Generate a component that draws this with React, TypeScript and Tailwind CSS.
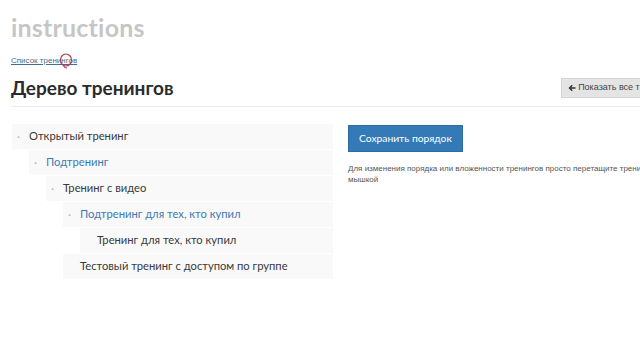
import React from 'react';

type Node = { title: string; level: number; bullet: boolean; link: boolean };

const tree: Node[] = [
  { title: 'Открытый тренинг', level: 0, bullet: true, link: false },
  { title: 'Подтренинг', level: 1, bullet: true, link: true },
  { title: 'Тренинг с видео', level: 2, bullet: true, link: false },
  { title: 'Подтренинг для тех, кто купил', level: 3, bullet: true, link: true },
  { title: 'Тренинг для тех, кто купил', level: 4, bullet: false, link: false },
  { title: 'Тестовый тренинг с доступом по группе', level: 3, bullet: false, link: false },
];

const indent = ['ml-0', 'ml-[17px]', 'ml-[34px]', 'ml-[51px]', 'ml-[68px]'];

function TreeRow({ node }: { node: Node }) {
  return (
    <div className={`${indent[node.level]} flex items-center h-[25px] mb-px bg-[#f9f9f9] pl-[5px]`}>
      <span className="w-[12px] text-[#b8b8b8] text-[12px] leading-none">{node.bullet ? '·' : ''}</span>
      <span className={`text-[11.2px] ${node.link ? 'text-[#3b7bb0]' : 'text-[#3a3a3a]'}`}>{node.title}</span>
    </div>
  );
}

export default function App() {
  return (
    <div className="w-[640px] h-[360px] overflow-hidden bg-white relative" style={{ fontFamily: 'Lato, "Open Sans", sans-serif' }}>
      <div className="w-[720px] pl-[11px] pt-[12px]">
        {/* Page title */}
        <h1 className="text-[25px] font-bold text-[#c6c6c6] leading-[30px] tracking-[0.2px]">instructions</h1>

        {/* Breadcrumb */}
        <a
          className="block mt-[13px] text-[8px] leading-[12px] text-[#4a6d8c] underline"
          style={{ fontFamily: '"Liberation Sans", Arial, sans-serif' }}
        >
          Список тренингов
        </a>

        {/* Header row */}
        <div className="flex items-center justify-between pr-[39px] mt-[9px] pb-[6px] border-b border-[#ececec]">
          <h2 className="text-[19px] font-bold text-[#2b2b2b] leading-[24px]">Дерево тренингов</h2>
          <button
            className="h-[20px] pl-[6px] pr-[7px] bg-[#e4e4e4] border border-[#d6d6d6] text-[9px] text-[#444] flex items-center gap-[2px]"
            style={{ fontFamily: '"Liberation Sans", Arial, sans-serif' }}
          >
            <svg width="8" height="8" viewBox="0 0 16 16" fill="#333">
              <path d="M1 8 L7.5 1.5 L9.5 3.5 L6.5 6.5 H15 V9.5 H6.5 L9.5 12.5 L7.5 14.5 Z" />
            </svg>
            Показать все тренинги
          </button>
        </div>

        {/* Body */}
        <div className="flex mt-[17px]">
          <div className="w-[321px] ml-[1px]">
            {tree.map((n, i) => (
              <TreeRow key={i} node={n} />
            ))}
          </div>
          <div className="ml-[15px] w-[360px]">
            <button className="h-[27px] px-[10px] bg-[#337ab7] border border-[#2e6da4] text-white text-[10.3px]">
              Сохранить порядок
            </button>
            <p
              className="mt-[11px] text-[8px] leading-[11px] text-[#555] w-[318px]"
              style={{ fontFamily: '"Liberation Sans", Arial, sans-serif' }}
            >
              Для изменения порядка или вложенности тренингов просто перетащите тренинги мышкой
            </p>
          </div>
        </div>
      </div>

      {/* cursor highlight */}
      <svg className="absolute left-[58px] top-[52px]" width="16" height="20" viewBox="0 0 16 20">
        <ellipse cx="8" cy="8" rx="5.5" ry="6" fill="none" stroke="#b23a4a" strokeWidth="1.2" />
        <path d="M5 12 Q6 17 9 16" fill="none" stroke="#b23a4a" strokeWidth="1" />
      </svg>
    </div>
  );
}
